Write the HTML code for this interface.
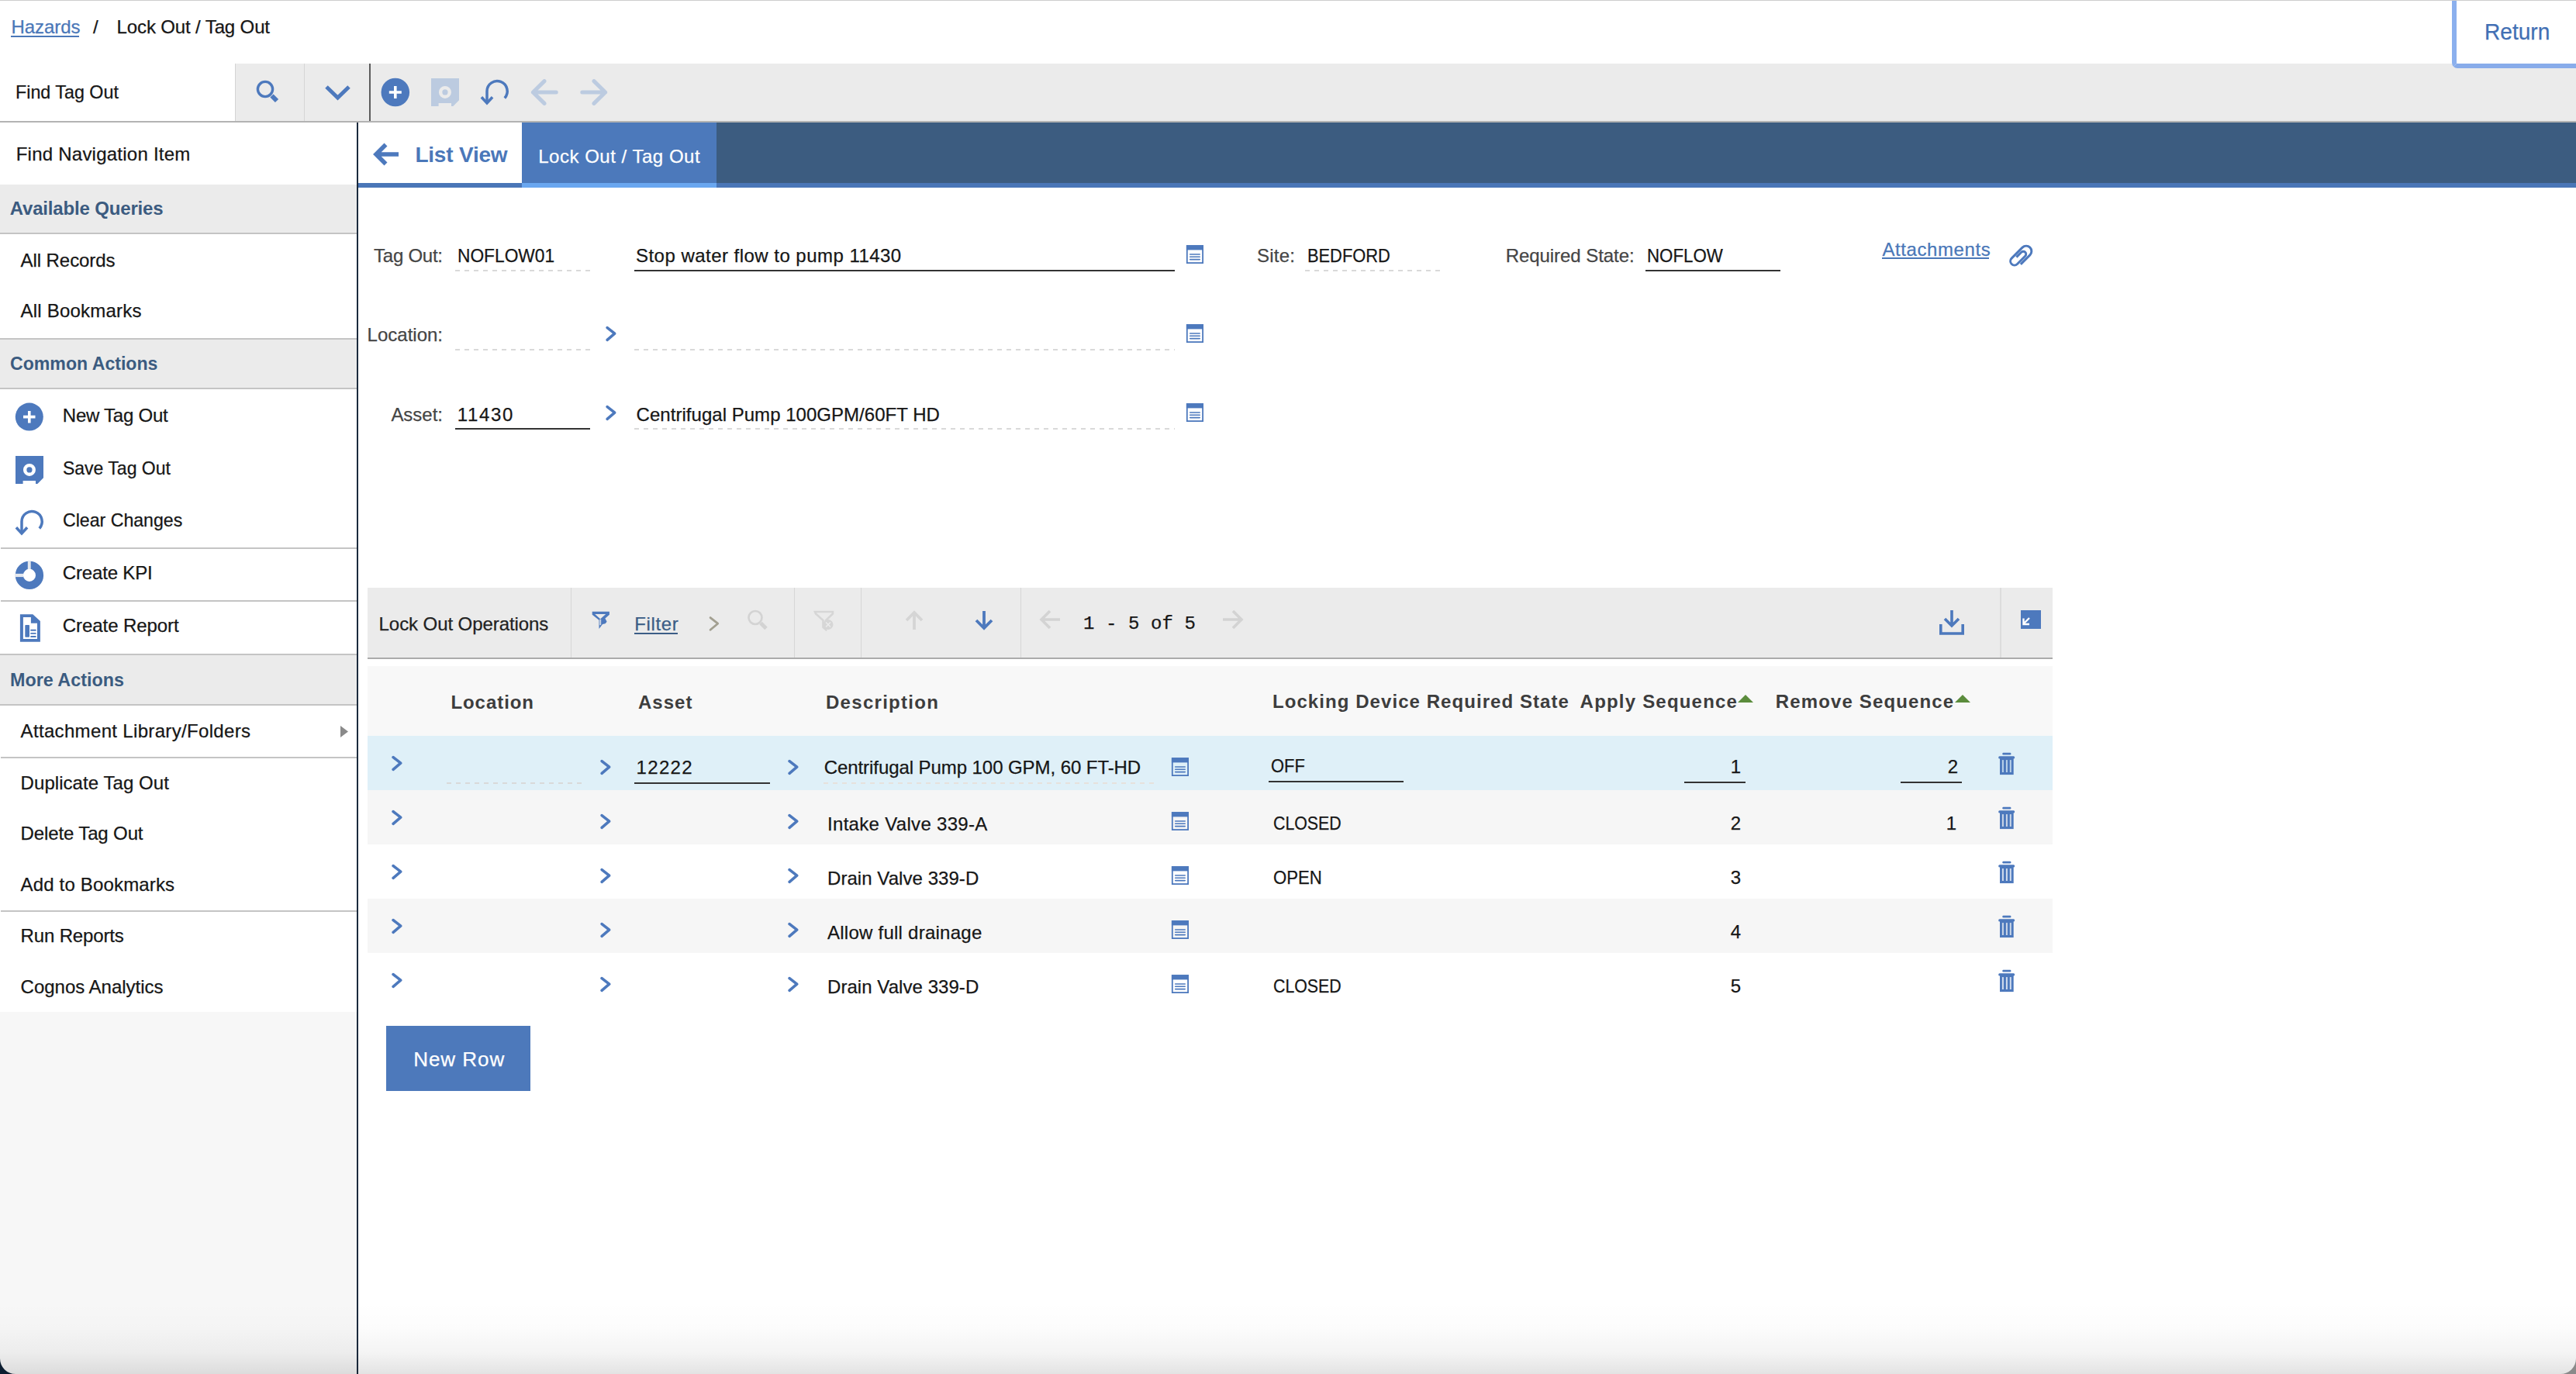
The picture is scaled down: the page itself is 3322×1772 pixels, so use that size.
<!DOCTYPE html>
<html><head><meta charset="utf-8"><style>
html,body{margin:0;padding:0;background:#fff;}
body{position:relative;width:3322px;height:1772px;overflow:hidden;font-family:'Liberation Sans', sans-serif;}
.tx{-webkit-text-stroke:0.25px currentColor;}
</style></head><body>
<div style="position:absolute;left:14px;top:46px;width:88px;height:2px;background:#4a77b8;"></div>
<div style="position:absolute;left:0px;top:82px;width:3322px;height:74px;background:#ebebeb;"></div>
<div style="position:absolute;left:0px;top:156px;width:3322px;height:2px;background:#b3b3b3;"></div>
<div style="position:absolute;left:0px;top:82px;width:303px;height:74px;background:#ffffff;"></div>
<div style="position:absolute;left:303px;top:82px;width:1px;height:74px;background:#d4d4d4;"></div>
<div style="position:absolute;left:392px;top:82px;width:1px;height:74px;background:#d6d6d6;"></div>
<div style="position:absolute;left:476px;top:82px;width:2px;height:74px;background:#5c5c5c;"></div>
<svg style="position:absolute;left:325px;top:98px" width="40" height="40" viewBox="0 0 40 40"><circle cx="17" cy="17" r="9.6" fill="none" stroke="#4d79bd" stroke-width="3.4"/><line x1="25.5" y1="25.5" x2="32" y2="32" stroke="#4d79bd" stroke-width="6"/></svg>
<svg style="position:absolute;left:415px;top:104px" width="42" height="30" viewBox="0 0 42 30"><polyline points="6,8 20.5,22 35,8" fill="none" stroke="#4d79bd" stroke-width="5"/></svg>
<svg style="position:absolute;left:490px;top:99px" width="40" height="40" viewBox="0 0 40 40"><circle cx="19.8" cy="20" r="18.3" fill="#4d79bd"/><path d="M19.8 12v16M11.8 20h16" stroke="#fff" stroke-width="3.6"/></svg>
<svg style="position:absolute;left:556px;top:101px" width="36" height="36" viewBox="0 0 36 36"><path d="M0 0H36V28.2L28.3 36H26V32.1H9.6V36H0Z" fill="#bccbe0"/><circle cx="17.95" cy="17.9" r="5.8" fill="none" stroke="#ebebeb" stroke-width="4.4"/></svg>
<svg style="position:absolute;left:610.0px;top:95.05px" width="50" height="45" viewBox="0 0 50 45"><path d="M40.8 31.5 A13.1 13.1 0 1 0 18 22.7 V37" fill="none" stroke="#4d79bd" stroke-width="3.5"/><path d="M10.9 30.3 L18 38 L25.1 30.3" fill="none" stroke="#4d79bd" stroke-width="3.5"/></svg>
<svg style="position:absolute;left:683px;top:102px" width="38" height="34" viewBox="0 0 38 34"><path d="M19 2.6 L4.4 17 L19 31.4 M4.4 17 H34.2" fill="none" stroke="#bccbe0" stroke-width="5" stroke-linecap="round" stroke-linejoin="round"/></svg>
<svg style="position:absolute;left:746.5px;top:102px" width="38" height="34" viewBox="0 0 38 34"><g transform="translate(38,0) scale(-1,1)"><path d="M19 2.6 L4.4 17 L19 31.4 M4.4 17 H34.2" fill="none" stroke="#bccbe0" stroke-width="5" stroke-linecap="round" stroke-linejoin="round"/></g></svg>
<div style="position:absolute;left:3162px;top:-6px;width:200px;height:88px;background:#fff;border-left:6px solid #8bb0ee;border-bottom:6px solid #88acea;border-bottom-left-radius:7px"></div>
<div style="position:absolute;left:0px;top:0px;width:3322px;height:1px;background:#cdcdcd;"></div>
<div style="position:absolute;left:0px;top:158px;width:460px;height:1147px;background:#ffffff;"></div>
<div style="position:absolute;left:0px;top:1305px;width:460px;height:3322px;background:#f7f7f7;"></div>
<div style="position:absolute;left:460px;top:158px;width:2px;height:1614px;background:#1b2a3d;"></div>
<div style="position:absolute;left:0px;top:238px;width:460px;height:62px;background:#ebebeb;"></div>
<div style="position:absolute;left:0px;top:300px;width:460px;height:2px;background:#c4c4c4;"></div>
<div style="position:absolute;left:0px;top:436px;width:460px;height:2px;background:#c4c4c4;"></div>
<div style="position:absolute;left:0px;top:438px;width:460px;height:62px;background:#ebebeb;"></div>
<div style="position:absolute;left:0px;top:500px;width:460px;height:2px;background:#c4c4c4;"></div>
<svg style="position:absolute;left:19px;top:519px" width="38" height="38" viewBox="0 0 38 38"><circle cx="18.8" cy="18.6" r="18" fill="#4d79bd"/><path d="M18.8 11v15.5M11 18.6h15.5" stroke="#fff" stroke-width="3.6"/></svg>
<svg style="position:absolute;left:20px;top:588px" width="36" height="36" viewBox="0 0 36 36"><path d="M0 0H36V28.2L28.3 36H26V32.1H9.6V36H0Z" fill="#4d79bd"/><circle cx="17.95" cy="17.9" r="5.8" fill="none" stroke="#ffffff" stroke-width="4.4"/></svg>
<svg style="position:absolute;left:10.0px;top:650.0px" width="50" height="45" viewBox="0 0 50 45"><path d="M40.8 31.5 A13.1 13.1 0 1 0 18 22.7 V37" fill="none" stroke="#4d79bd" stroke-width="3.5"/><path d="M10.9 30.3 L18 38 L25.1 30.3" fill="none" stroke="#4d79bd" stroke-width="3.5"/></svg>
<div style="position:absolute;left:1px;top:706px;width:459px;height:2px;background:#c4c4c4;"></div>
<svg style="position:absolute;left:19px;top:723px" width="38" height="38" viewBox="0 0 38 38"><circle cx="18.95" cy="18.9" r="13.1" fill="none" stroke="#4d79bd" stroke-width="10.1"/><rect x="16.8" y="0" width="3.9" height="11" fill="#e4e8ee"/><rect x="0" y="16.9" width="11" height="4.2" fill="#e4e8ee"/></svg>
<div style="position:absolute;left:1px;top:774px;width:459px;height:2px;background:#c4c4c4;"></div>
<svg style="position:absolute;left:25px;top:791px" width="29" height="38" viewBox="0 0 29 38"><path fill-rule="evenodd" d="M0.9 1.2H17.3L26.9 10V36.8H0.9Z M4.9 5H14.9V12.8H23V32.9H4.9Z" fill="#4d79bd"/><rect x="7.3" y="15.1" width="5.7" height="15.6" rx="0.8" fill="#4d79bd"/><path d="M15.1 21.8h5.7M15.1 25.9h5.7M15.1 30h5.7" stroke="#4d79bd" stroke-width="1.9" stroke-linecap="round"/></svg>
<div style="position:absolute;left:0px;top:843px;width:460px;height:2px;background:#c4c4c4;"></div>
<div style="position:absolute;left:0px;top:845px;width:460px;height:63px;background:#ebebeb;"></div>
<div style="position:absolute;left:0px;top:908px;width:460px;height:2px;background:#c4c4c4;"></div>
<svg style="position:absolute;left:437px;top:934px" width="16" height="20" viewBox="0 0 16 20"><path d="M2 2 L12 9.5 L2 17Z" fill="#8a8a8a"/></svg>
<div style="position:absolute;left:1px;top:976px;width:459px;height:2px;background:#c4c4c4;"></div>
<div style="position:absolute;left:1px;top:1173.5px;width:459px;height:2px;background:#c4c4c4;"></div>
<div style="position:absolute;left:462px;top:158px;width:2860px;height:78px;background:#3c5c80;"></div>
<div style="position:absolute;left:462px;top:158px;width:211px;height:78px;background:#ffffff;"></div>
<div style="position:absolute;left:673px;top:158px;width:251px;height:78px;background:#4c79bb;"></div>
<div style="position:absolute;left:462px;top:236px;width:2860px;height:6px;background:#4a76b7;"></div>
<div style="position:absolute;left:673px;top:236px;width:251px;height:6px;background:#6aa7f0;"></div>
<svg style="position:absolute;left:480px;top:182px" width="36" height="36" viewBox="0 0 36 36"><path d="M17.5 4.5 L5 17 L17.5 29.5 M5 17 H34" fill="none" stroke="#4d79bd" stroke-width="5.6"/></svg>
<div style="position:absolute;left:587px;top:348px;width:174px;height:2px;background:repeating-linear-gradient(90deg,#d9d9d9 0 6px,transparent 6px 12px)"></div>
<div style="position:absolute;left:818px;top:348px;width:697px;height:2px;background:#333333;"></div>
<svg style="position:absolute;left:1529px;top:314.5px" width="24" height="26" viewBox="0 0 24 26"><rect x="1.8" y="2.1" width="20.3" height="22" fill="none" stroke="#4d79bd" stroke-width="1.8"/><rect x="0.9" y="1.2" width="22.1" height="6.2" fill="#4d79bd"/><path d="M5.7 13h12.5M5.7 16.3h12.5M5.7 19.6h12.5" stroke="#4d79bd" stroke-width="1.6" stroke-linecap="round"/></svg>
<div style="position:absolute;left:1683px;top:348px;width:174px;height:2px;background:repeating-linear-gradient(90deg,#d9d9d9 0 6px,transparent 6px 12px)"></div>
<div style="position:absolute;left:2122px;top:348px;width:174px;height:2px;background:#333333;"></div>
<div style="position:absolute;left:2427px;top:332px;width:138px;height:2px;background:#4a77b8;"></div>
<svg style="position:absolute;left:2585px;top:308px" width="42" height="42" viewBox="0 0 42 42"><g transform="translate(21.6,22.4) rotate(45) scale(1.06) translate(0,-15)"><path d="M6.5 22.5 V6.5 A6.5 6.5 0 0 0 -6.5 6.5 V25.1 A4.9 4.9 0 0 0 3.3 25.1 V11.5 A3.3 3.3 0 0 0 -3.3 11.5 V20" fill="none" stroke="#4d79bd" stroke-width="2.8"/></g></svg>
<div style="position:absolute;left:587px;top:450px;width:174px;height:2px;background:repeating-linear-gradient(90deg,#d9d9d9 0 6px,transparent 6px 12px)"></div>
<svg style="position:absolute;left:779.7px;top:420px" width="20" height="24" viewBox="0 0 20 24"><polyline points="3.1,2.6 12.7,10.2 3.1,18.3" fill="none" stroke="#4d79bd" stroke-width="3.6" stroke-linecap="round" stroke-linejoin="round"/></svg>
<div style="position:absolute;left:818px;top:450px;width:697px;height:2px;background:repeating-linear-gradient(90deg,#d9d9d9 0 6px,transparent 6px 12px)"></div>
<svg style="position:absolute;left:1529px;top:416.5px" width="24" height="26" viewBox="0 0 24 26"><rect x="1.8" y="2.1" width="20.3" height="22" fill="none" stroke="#4d79bd" stroke-width="1.8"/><rect x="0.9" y="1.2" width="22.1" height="6.2" fill="#4d79bd"/><path d="M5.7 13h12.5M5.7 16.3h12.5M5.7 19.6h12.5" stroke="#4d79bd" stroke-width="1.6" stroke-linecap="round"/></svg>
<div style="position:absolute;left:587px;top:552px;width:174px;height:2px;background:#333333;"></div>
<svg style="position:absolute;left:779.7px;top:521.6px" width="20" height="24" viewBox="0 0 20 24"><polyline points="3.1,2.6 12.7,10.2 3.1,18.3" fill="none" stroke="#4d79bd" stroke-width="3.6" stroke-linecap="round" stroke-linejoin="round"/></svg>
<div style="position:absolute;left:818px;top:552px;width:697px;height:2px;background:repeating-linear-gradient(90deg,#d9d9d9 0 6px,transparent 6px 12px)"></div>
<svg style="position:absolute;left:1529px;top:519px" width="24" height="26" viewBox="0 0 24 26"><rect x="1.8" y="2.1" width="20.3" height="22" fill="none" stroke="#4d79bd" stroke-width="1.8"/><rect x="0.9" y="1.2" width="22.1" height="6.2" fill="#4d79bd"/><path d="M5.7 13h12.5M5.7 16.3h12.5M5.7 19.6h12.5" stroke="#4d79bd" stroke-width="1.6" stroke-linecap="round"/></svg>
<div style="position:absolute;left:474px;top:758px;width:2173px;height:90px;background:#ebebeb;"></div>
<div style="position:absolute;left:474px;top:848px;width:2173px;height:2px;background:#ababab;"></div>
<div style="position:absolute;left:735.5px;top:758px;width:1px;height:90px;background:#d6d6d6;"></div>
<div style="position:absolute;left:1023.5px;top:758px;width:1px;height:90px;background:#d6d6d6;"></div>
<div style="position:absolute;left:1110px;top:758px;width:1px;height:90px;background:#d6d6d6;"></div>
<div style="position:absolute;left:1315.5px;top:758px;width:1px;height:90px;background:#d6d6d6;"></div>
<div style="position:absolute;left:2579px;top:758px;width:2px;height:90px;background:#dcdcdc;"></div>
<svg style="position:absolute;left:760px;top:785px" width="28" height="30" viewBox="0 0 28 30"><path fill-rule="evenodd" d="M3.7 3.7 H25.9 V7.8 L20.4 12.6 L22.6 16.8 L20.6 19.2 L17.1 20 L12.5 25.9 V14.8 L3.7 7.8Z M7.2 7 H21.2 L14.2 13.3Z" fill="#4d79bd"/><rect x="13.2" y="13.6" width="2" height="7.6" fill="#c9d3e2"/></svg>
<div style="position:absolute;left:817.5px;top:816px;width:56px;height:2px;background:#3b5d86;"></div>
<svg style="position:absolute;left:912.5px;top:793.7px" width="20" height="24" viewBox="0 0 20 24"><polyline points="3.1,2.6 12.7,10.2 3.1,18.3" fill="none" stroke="#a29f90" stroke-width="2.8" stroke-linecap="round" stroke-linejoin="round"/></svg>
<svg style="position:absolute;left:960px;top:784px" width="34" height="32" viewBox="0 0 34 32"><circle cx="14" cy="12.5" r="8.5" fill="none" stroke="#d3d3d3" stroke-width="2.6"/><line x1="21" y1="19.5" x2="28" y2="26.5" stroke="#d3d3d3" stroke-width="5"/></svg>
<svg style="position:absolute;left:1049px;top:786px" width="28" height="28" viewBox="0 0 28 28"><path d="M2 3 H25 V5.5 L16 14 V26 L12.5 23 V14 L3 5.5Z" fill="none" stroke="#d6d6d6" stroke-width="2.6"/><circle cx="19" cy="19.5" r="6.5" fill="#d6d6d6"/><path d="M16 16.5l6 6M22 16.5l-6 6" stroke="#ebebeb" stroke-width="1.6"/></svg>
<svg style="position:absolute;left:1166px;top:786px" width="26" height="28" viewBox="0 0 26 28"><path d="M3 14 L13 4 L23 14 M13 4 V26" fill="none" stroke="#d5d5d5" stroke-width="3.8"/></svg>
<svg style="position:absolute;left:1256px;top:786px" width="26" height="28" viewBox="0 0 26 28"><g transform="translate(0,28) scale(1,-1)"><path d="M3 14 L13 4 L23 14 M13 4 V26" fill="none" stroke="#4d79bd" stroke-width="3.8"/></g></svg>
<svg style="position:absolute;left:1340px;top:785px" width="30" height="30" viewBox="0 0 30 30"><path d="M14 3 L3 14 L14 25 M3 14 H27" fill="none" stroke="#d3d3d3" stroke-width="3.6"/></svg>
<svg style="position:absolute;left:1574px;top:785px" width="30" height="30" viewBox="0 0 30 30"><g transform="translate(30,0) scale(-1,1)"><path d="M14 3 L3 14 L14 25 M3 14 H27" fill="none" stroke="#d3d3d3" stroke-width="3.6"/></g></svg>
<svg style="position:absolute;left:2499px;top:785px" width="36" height="36" viewBox="0 0 36 36"><path d="M18 2 V22 M9 13 L18 22 L27 13" fill="none" stroke="#4d79bd" stroke-width="3.6"/><path d="M3.8 20 V32 H32.2 V20" fill="none" stroke="#4d79bd" stroke-width="3.6"/></svg>
<svg style="position:absolute;left:2606px;top:787px" width="26" height="24" viewBox="0 0 26 24"><rect x="0" y="0" width="26" height="24" fill="#4d79bd"/><path d="M11 10 L4 17 M3.5 10.5 V18 H11" fill="none" stroke="#fff" stroke-width="2.4"/></svg>
<div style="position:absolute;left:474px;top:859px;width:2173px;height:90px;background:#f8f8f8;"></div>
<svg style="position:absolute;left:2241px;top:896px" width="20" height="10" viewBox="0 0 20 10"><path d="M0 10 L10 0 L20 10Z" fill="#5b8c3c"/></svg>
<svg style="position:absolute;left:2520.6px;top:896px" width="20" height="10" viewBox="0 0 20 10"><path d="M0 10 L10 0 L20 10Z" fill="#5b8c3c"/></svg>
<div style="position:absolute;left:474px;top:948.7px;width:2173px;height:70px;background:#dff0f8;"></div>
<svg style="position:absolute;left:504.4px;top:974.2px" width="20" height="24" viewBox="0 0 20 24"><polyline points="3.1,2.6 12.7,10.2 3.1,18.3" fill="none" stroke="#4d79bd" stroke-width="3.6" stroke-linecap="round" stroke-linejoin="round"/></svg>
<svg style="position:absolute;left:772.8px;top:978.9px" width="20" height="24" viewBox="0 0 20 24"><polyline points="3.1,2.6 12.7,10.2 3.1,18.3" fill="none" stroke="#4d79bd" stroke-width="3.6" stroke-linecap="round" stroke-linejoin="round"/></svg>
<svg style="position:absolute;left:1015px;top:978.9px" width="20" height="24" viewBox="0 0 20 24"><polyline points="3.1,2.6 12.7,10.2 3.1,18.3" fill="none" stroke="#4d79bd" stroke-width="3.6" stroke-linecap="round" stroke-linejoin="round"/></svg>
<svg style="position:absolute;left:1510px;top:976.2px" width="24" height="26" viewBox="0 0 24 26"><rect x="1.8" y="2.1" width="20.3" height="22" fill="none" stroke="#4d79bd" stroke-width="1.8"/><rect x="0.9" y="1.2" width="22.1" height="6.2" fill="#4d79bd"/><path d="M5.7 13h12.5M5.7 16.3h12.5M5.7 19.6h12.5" stroke="#4d79bd" stroke-width="1.6" stroke-linecap="round"/></svg>
<svg style="position:absolute;left:2576px;top:969.7px" width="24" height="30" viewBox="0 0 24 30"><rect x="6.3" y="0.7" width="11.1" height="2.8" rx="1.2" fill="#4d79bd"/><rect x="1.2" y="5.3" width="21" height="3.3" rx="1.5" fill="#4d79bd"/><rect x="3" y="8" width="17.7" height="21.1" fill="#4d79bd"/><rect x="5.9" y="10.1" width="2" height="15.9" fill="#dff0f8" opacity="0.75"/><rect x="10.9" y="10.1" width="2" height="15.9" fill="#dff0f8" opacity="0.75"/><rect x="15.8" y="10.1" width="2" height="15.9" fill="#dff0f8" opacity="0.75"/></svg>
<div style="position:absolute;left:576px;top:1009.2px;width:175px;height:2px;background:repeating-linear-gradient(90deg,#d9d9d9 0 6px,transparent 6px 12px)"></div>
<div style="position:absolute;left:818px;top:1009.0px;width:175px;height:2px;background:#333333;"></div>
<div style="position:absolute;left:1062px;top:1009.2px;width:430px;height:2px;background:repeating-linear-gradient(90deg,#e6e1dc 0 6px,transparent 6px 12px)"></div>
<div style="position:absolute;left:1636px;top:1007.0px;width:174px;height:2px;background:#333333;"></div>
<div style="position:absolute;left:2172px;top:1008.0px;width:79px;height:2px;background:#333333;"></div>
<div style="position:absolute;left:2451px;top:1008.0px;width:79px;height:2px;background:#333333;"></div>
<div style="position:absolute;left:474px;top:1018.7px;width:2173px;height:70px;background:#f6f6f6;"></div>
<svg style="position:absolute;left:504.4px;top:1044.2px" width="20" height="24" viewBox="0 0 20 24"><polyline points="3.1,2.6 12.7,10.2 3.1,18.3" fill="none" stroke="#4d79bd" stroke-width="3.6" stroke-linecap="round" stroke-linejoin="round"/></svg>
<svg style="position:absolute;left:772.8px;top:1048.9px" width="20" height="24" viewBox="0 0 20 24"><polyline points="3.1,2.6 12.7,10.2 3.1,18.3" fill="none" stroke="#4d79bd" stroke-width="3.6" stroke-linecap="round" stroke-linejoin="round"/></svg>
<svg style="position:absolute;left:1015px;top:1048.9px" width="20" height="24" viewBox="0 0 20 24"><polyline points="3.1,2.6 12.7,10.2 3.1,18.3" fill="none" stroke="#4d79bd" stroke-width="3.6" stroke-linecap="round" stroke-linejoin="round"/></svg>
<svg style="position:absolute;left:1510px;top:1046.2px" width="24" height="26" viewBox="0 0 24 26"><rect x="1.8" y="2.1" width="20.3" height="22" fill="none" stroke="#4d79bd" stroke-width="1.8"/><rect x="0.9" y="1.2" width="22.1" height="6.2" fill="#4d79bd"/><path d="M5.7 13h12.5M5.7 16.3h12.5M5.7 19.6h12.5" stroke="#4d79bd" stroke-width="1.6" stroke-linecap="round"/></svg>
<svg style="position:absolute;left:2576px;top:1039.7px" width="24" height="30" viewBox="0 0 24 30"><rect x="6.3" y="0.7" width="11.1" height="2.8" rx="1.2" fill="#4d79bd"/><rect x="1.2" y="5.3" width="21" height="3.3" rx="1.5" fill="#4d79bd"/><rect x="3" y="8" width="17.7" height="21.1" fill="#4d79bd"/><rect x="5.9" y="10.1" width="2" height="15.9" fill="#f6f6f6" opacity="0.75"/><rect x="10.9" y="10.1" width="2" height="15.9" fill="#f6f6f6" opacity="0.75"/><rect x="15.8" y="10.1" width="2" height="15.9" fill="#f6f6f6" opacity="0.75"/></svg>
<div style="position:absolute;left:474px;top:1088.7px;width:2173px;height:70px;background:#ffffff;"></div>
<svg style="position:absolute;left:504.4px;top:1114.2px" width="20" height="24" viewBox="0 0 20 24"><polyline points="3.1,2.6 12.7,10.2 3.1,18.3" fill="none" stroke="#4d79bd" stroke-width="3.6" stroke-linecap="round" stroke-linejoin="round"/></svg>
<svg style="position:absolute;left:772.8px;top:1118.9px" width="20" height="24" viewBox="0 0 20 24"><polyline points="3.1,2.6 12.7,10.2 3.1,18.3" fill="none" stroke="#4d79bd" stroke-width="3.6" stroke-linecap="round" stroke-linejoin="round"/></svg>
<svg style="position:absolute;left:1015px;top:1118.9px" width="20" height="24" viewBox="0 0 20 24"><polyline points="3.1,2.6 12.7,10.2 3.1,18.3" fill="none" stroke="#4d79bd" stroke-width="3.6" stroke-linecap="round" stroke-linejoin="round"/></svg>
<svg style="position:absolute;left:1510px;top:1116.2px" width="24" height="26" viewBox="0 0 24 26"><rect x="1.8" y="2.1" width="20.3" height="22" fill="none" stroke="#4d79bd" stroke-width="1.8"/><rect x="0.9" y="1.2" width="22.1" height="6.2" fill="#4d79bd"/><path d="M5.7 13h12.5M5.7 16.3h12.5M5.7 19.6h12.5" stroke="#4d79bd" stroke-width="1.6" stroke-linecap="round"/></svg>
<svg style="position:absolute;left:2576px;top:1109.7px" width="24" height="30" viewBox="0 0 24 30"><rect x="6.3" y="0.7" width="11.1" height="2.8" rx="1.2" fill="#4d79bd"/><rect x="1.2" y="5.3" width="21" height="3.3" rx="1.5" fill="#4d79bd"/><rect x="3" y="8" width="17.7" height="21.1" fill="#4d79bd"/><rect x="5.9" y="10.1" width="2" height="15.9" fill="#ffffff" opacity="0.75"/><rect x="10.9" y="10.1" width="2" height="15.9" fill="#ffffff" opacity="0.75"/><rect x="15.8" y="10.1" width="2" height="15.9" fill="#ffffff" opacity="0.75"/></svg>
<div style="position:absolute;left:474px;top:1158.7px;width:2173px;height:70px;background:#f6f6f6;"></div>
<svg style="position:absolute;left:504.4px;top:1184.2px" width="20" height="24" viewBox="0 0 20 24"><polyline points="3.1,2.6 12.7,10.2 3.1,18.3" fill="none" stroke="#4d79bd" stroke-width="3.6" stroke-linecap="round" stroke-linejoin="round"/></svg>
<svg style="position:absolute;left:772.8px;top:1188.9px" width="20" height="24" viewBox="0 0 20 24"><polyline points="3.1,2.6 12.7,10.2 3.1,18.3" fill="none" stroke="#4d79bd" stroke-width="3.6" stroke-linecap="round" stroke-linejoin="round"/></svg>
<svg style="position:absolute;left:1015px;top:1188.9px" width="20" height="24" viewBox="0 0 20 24"><polyline points="3.1,2.6 12.7,10.2 3.1,18.3" fill="none" stroke="#4d79bd" stroke-width="3.6" stroke-linecap="round" stroke-linejoin="round"/></svg>
<svg style="position:absolute;left:1510px;top:1186.2px" width="24" height="26" viewBox="0 0 24 26"><rect x="1.8" y="2.1" width="20.3" height="22" fill="none" stroke="#4d79bd" stroke-width="1.8"/><rect x="0.9" y="1.2" width="22.1" height="6.2" fill="#4d79bd"/><path d="M5.7 13h12.5M5.7 16.3h12.5M5.7 19.6h12.5" stroke="#4d79bd" stroke-width="1.6" stroke-linecap="round"/></svg>
<svg style="position:absolute;left:2576px;top:1179.7px" width="24" height="30" viewBox="0 0 24 30"><rect x="6.3" y="0.7" width="11.1" height="2.8" rx="1.2" fill="#4d79bd"/><rect x="1.2" y="5.3" width="21" height="3.3" rx="1.5" fill="#4d79bd"/><rect x="3" y="8" width="17.7" height="21.1" fill="#4d79bd"/><rect x="5.9" y="10.1" width="2" height="15.9" fill="#f6f6f6" opacity="0.75"/><rect x="10.9" y="10.1" width="2" height="15.9" fill="#f6f6f6" opacity="0.75"/><rect x="15.8" y="10.1" width="2" height="15.9" fill="#f6f6f6" opacity="0.75"/></svg>
<div style="position:absolute;left:474px;top:1228.7px;width:2173px;height:70px;background:#ffffff;"></div>
<svg style="position:absolute;left:504.4px;top:1254.2px" width="20" height="24" viewBox="0 0 20 24"><polyline points="3.1,2.6 12.7,10.2 3.1,18.3" fill="none" stroke="#4d79bd" stroke-width="3.6" stroke-linecap="round" stroke-linejoin="round"/></svg>
<svg style="position:absolute;left:772.8px;top:1258.9px" width="20" height="24" viewBox="0 0 20 24"><polyline points="3.1,2.6 12.7,10.2 3.1,18.3" fill="none" stroke="#4d79bd" stroke-width="3.6" stroke-linecap="round" stroke-linejoin="round"/></svg>
<svg style="position:absolute;left:1015px;top:1258.9px" width="20" height="24" viewBox="0 0 20 24"><polyline points="3.1,2.6 12.7,10.2 3.1,18.3" fill="none" stroke="#4d79bd" stroke-width="3.6" stroke-linecap="round" stroke-linejoin="round"/></svg>
<svg style="position:absolute;left:1510px;top:1256.2px" width="24" height="26" viewBox="0 0 24 26"><rect x="1.8" y="2.1" width="20.3" height="22" fill="none" stroke="#4d79bd" stroke-width="1.8"/><rect x="0.9" y="1.2" width="22.1" height="6.2" fill="#4d79bd"/><path d="M5.7 13h12.5M5.7 16.3h12.5M5.7 19.6h12.5" stroke="#4d79bd" stroke-width="1.6" stroke-linecap="round"/></svg>
<svg style="position:absolute;left:2576px;top:1249.7px" width="24" height="30" viewBox="0 0 24 30"><rect x="6.3" y="0.7" width="11.1" height="2.8" rx="1.2" fill="#4d79bd"/><rect x="1.2" y="5.3" width="21" height="3.3" rx="1.5" fill="#4d79bd"/><rect x="3" y="8" width="17.7" height="21.1" fill="#4d79bd"/><rect x="5.9" y="10.1" width="2" height="15.9" fill="#ffffff" opacity="0.75"/><rect x="10.9" y="10.1" width="2" height="15.9" fill="#ffffff" opacity="0.75"/><rect x="15.8" y="10.1" width="2" height="15.9" fill="#ffffff" opacity="0.75"/></svg>
<div style="position:absolute;left:498px;top:1323px;width:186px;height:84px;background:#4d79bb;"></div>
<div style="position:absolute;left:0;top:1680px;width:3322px;height:92px;background:linear-gradient(180deg,rgba(0,0,0,0) 0%,rgba(0,0,0,0.012) 35%,rgba(0,0,0,0.045) 70%,rgba(0,0,0,0.11) 100%)"></div>
<svg style="position:absolute;left:0px;top:1752px" width="20" height="20" viewBox="0 0 20 20"><path d="M0 0 A20 20 0 0 0 20 20 H0Z" fill="#0c1d30"/></svg>
<svg style="position:absolute;left:3302px;top:1752px" width="20" height="20" viewBox="0 0 20 20"><path d="M20 0 A20 20 0 0 1 0 20 H20Z" fill="#8a8a8a"/></svg>
<div class="tx" style="position:absolute;left:14.50px;top:23.30px;font-family:'Liberation Sans', sans-serif;font-size:24px;font-weight:400;color:#4a77b8;line-height:1;white-space:pre;letter-spacing:-0.076px;">Hazards</div>
<div class="tx" style="position:absolute;left:120.00px;top:23.30px;font-family:'Liberation Sans', sans-serif;font-size:24px;font-weight:400;color:#161616;line-height:1;white-space:pre;letter-spacing:0.000px;">/</div>
<div class="tx" style="position:absolute;left:150.60px;top:23.30px;font-family:'Liberation Sans', sans-serif;font-size:24px;font-weight:400;color:#161616;line-height:1;white-space:pre;letter-spacing:-0.132px;">Lock Out / Tag Out</div>
<div class="tx" style="position:absolute;left:20.40px;top:106.60px;font-family:'Liberation Sans', sans-serif;font-size:24px;font-weight:400;color:#161616;line-height:1;white-space:pre;letter-spacing:0.000px;transform:scaleX(0.9700);transform-origin:0 0;">Find Tag Out</div>
<div class="tx" style="position:absolute;left:3203.70px;top:27.15px;font-family:'Liberation Sans', sans-serif;font-size:29px;font-weight:400;color:#416fb4;line-height:1;white-space:pre;letter-spacing:0.000px;transform:scaleX(0.9678);transform-origin:0 0;">Return</div>
<div class="tx" style="position:absolute;left:20.70px;top:186.80px;font-family:'Liberation Sans', sans-serif;font-size:24px;font-weight:400;color:#161616;line-height:1;white-space:pre;letter-spacing:0.237px;">Find Navigation Item</div>
<div class="" style="position:absolute;left:12.70px;top:257.30px;font-family:'Liberation Sans', sans-serif;font-size:24px;font-weight:700;color:#3b5b80;line-height:1;white-space:pre;letter-spacing:-0.164px;">Available Queries</div>
<div class="tx" style="position:absolute;left:26.60px;top:323.50px;font-family:'Liberation Sans', sans-serif;font-size:24px;font-weight:400;color:#161616;line-height:1;white-space:pre;letter-spacing:-0.080px;">All Records</div>
<div class="tx" style="position:absolute;left:26.60px;top:389.40px;font-family:'Liberation Sans', sans-serif;font-size:24px;font-weight:400;color:#161616;line-height:1;white-space:pre;letter-spacing:0.212px;">All Bookmarks</div>
<div class="" style="position:absolute;left:12.70px;top:457.20px;font-family:'Liberation Sans', sans-serif;font-size:24px;font-weight:700;color:#3b5b80;line-height:1;white-space:pre;letter-spacing:0.000px;transform:scaleX(0.9629);transform-origin:0 0;">Common Actions</div>
<div class="tx" style="position:absolute;left:80.80px;top:523.60px;font-family:'Liberation Sans', sans-serif;font-size:24px;font-weight:400;color:#161616;line-height:1;white-space:pre;letter-spacing:-0.238px;">New Tag Out</div>
<div class="tx" style="position:absolute;left:80.80px;top:591.50px;font-family:'Liberation Sans', sans-serif;font-size:24px;font-weight:400;color:#161616;line-height:1;white-space:pre;letter-spacing:0.000px;transform:scaleX(0.9576);transform-origin:0 0;">Save Tag Out</div>
<div class="tx" style="position:absolute;left:80.80px;top:659.20px;font-family:'Liberation Sans', sans-serif;font-size:24px;font-weight:400;color:#161616;line-height:1;white-space:pre;letter-spacing:0.000px;transform:scaleX(0.9635);transform-origin:0 0;">Clear Changes</div>
<div class="tx" style="position:absolute;left:80.80px;top:727.20px;font-family:'Liberation Sans', sans-serif;font-size:24px;font-weight:400;color:#161616;line-height:1;white-space:pre;letter-spacing:-0.163px;">Create KPI</div>
<div class="tx" style="position:absolute;left:80.80px;top:795.30px;font-family:'Liberation Sans', sans-serif;font-size:24px;font-weight:400;color:#161616;line-height:1;white-space:pre;letter-spacing:-0.069px;">Create Report</div>
<div class="" style="position:absolute;left:12.70px;top:865.20px;font-family:'Liberation Sans', sans-serif;font-size:24px;font-weight:700;color:#3b5b80;line-height:1;white-space:pre;letter-spacing:0.000px;transform:scaleX(0.9718);transform-origin:0 0;">More Actions</div>
<div class="tx" style="position:absolute;left:26.60px;top:931.30px;font-family:'Liberation Sans', sans-serif;font-size:24px;font-weight:400;color:#161616;line-height:1;white-space:pre;letter-spacing:0.332px;">Attachment Library/Folders</div>
<div class="tx" style="position:absolute;left:26.60px;top:997.50px;font-family:'Liberation Sans', sans-serif;font-size:24px;font-weight:400;color:#161616;line-height:1;white-space:pre;letter-spacing:0.055px;">Duplicate Tag Out</div>
<div class="tx" style="position:absolute;left:26.60px;top:1063.20px;font-family:'Liberation Sans', sans-serif;font-size:24px;font-weight:400;color:#161616;line-height:1;white-space:pre;letter-spacing:-0.134px;">Delete Tag Out</div>
<div class="tx" style="position:absolute;left:26.60px;top:1129.10px;font-family:'Liberation Sans', sans-serif;font-size:24px;font-weight:400;color:#161616;line-height:1;white-space:pre;letter-spacing:0.162px;">Add to Bookmarks</div>
<div class="tx" style="position:absolute;left:26.60px;top:1195.30px;font-family:'Liberation Sans', sans-serif;font-size:24px;font-weight:400;color:#161616;line-height:1;white-space:pre;letter-spacing:-0.161px;">Run Reports</div>
<div class="tx" style="position:absolute;left:26.60px;top:1260.80px;font-family:'Liberation Sans', sans-serif;font-size:24px;font-weight:400;color:#161616;line-height:1;white-space:pre;letter-spacing:-0.013px;">Cognos Analytics</div>
<div class="" style="position:absolute;left:535.40px;top:186.00px;font-family:'Liberation Sans', sans-serif;font-size:28px;font-weight:700;color:#4a77b9;line-height:1;white-space:pre;letter-spacing:-0.202px;">List View</div>
<div class="tx" style="position:absolute;left:694.20px;top:189.60px;font-family:'Liberation Sans', sans-serif;font-size:24px;font-weight:400;color:#ffffff;line-height:1;white-space:pre;letter-spacing:0.515px;">Lock Out / Tag Out</div>
<div class="tx" style="position:absolute;left:482.08px;top:318.10px;font-family:'Liberation Sans', sans-serif;font-size:24px;font-weight:400;color:#454545;line-height:1;white-space:pre;letter-spacing:-0.257px;">Tag Out:</div>
<div class="tx" style="position:absolute;left:589.70px;top:317.80px;font-family:'Liberation Sans', sans-serif;font-size:24px;font-weight:400;color:#161616;line-height:1;white-space:pre;letter-spacing:0.000px;transform:scaleX(0.9477);transform-origin:0 0;">NOFLOW01</div>
<div class="tx" style="position:absolute;left:820.00px;top:317.80px;font-family:'Liberation Sans', sans-serif;font-size:24px;font-weight:400;color:#161616;line-height:1;white-space:pre;letter-spacing:0.469px;">Stop water flow to pump 11430</div>
<div class="tx" style="position:absolute;left:1621.00px;top:318.10px;font-family:'Liberation Sans', sans-serif;font-size:24px;font-weight:400;color:#454545;line-height:1;white-space:pre;letter-spacing:0.222px;">Site:</div>
<div class="tx" style="position:absolute;left:1686.30px;top:317.80px;font-family:'Liberation Sans', sans-serif;font-size:24px;font-weight:400;color:#161616;line-height:1;white-space:pre;letter-spacing:0.000px;transform:scaleX(0.9097);transform-origin:0 0;">BEDFORD</div>
<div class="tx" style="position:absolute;left:1941.70px;top:318.10px;font-family:'Liberation Sans', sans-serif;font-size:24px;font-weight:400;color:#454545;line-height:1;white-space:pre;letter-spacing:-0.062px;">Required State:</div>
<div class="tx" style="position:absolute;left:2124.20px;top:317.80px;font-family:'Liberation Sans', sans-serif;font-size:24px;font-weight:400;color:#161616;line-height:1;white-space:pre;letter-spacing:0.000px;transform:scaleX(0.9284);transform-origin:0 0;">NOFLOW</div>
<div class="tx" style="position:absolute;left:2427.40px;top:309.80px;font-family:'Liberation Sans', sans-serif;font-size:24px;font-weight:400;color:#4a77b8;line-height:1;white-space:pre;letter-spacing:0.591px;">Attachments</div>
<div class="tx" style="position:absolute;left:473.58px;top:420.20px;font-family:'Liberation Sans', sans-serif;font-size:24px;font-weight:400;color:#454545;line-height:1;white-space:pre;letter-spacing:0.002px;">Location:</div>
<div class="tx" style="position:absolute;left:504.38px;top:522.70px;font-family:'Liberation Sans', sans-serif;font-size:24px;font-weight:400;color:#454545;line-height:1;white-space:pre;letter-spacing:-0.017px;">Asset:</div>
<div class="tx" style="position:absolute;left:589.70px;top:522.60px;font-family:'Liberation Sans', sans-serif;font-size:24px;font-weight:400;color:#161616;line-height:1;white-space:pre;letter-spacing:1.688px;">11430</div>
<div class="tx" style="position:absolute;left:820.60px;top:522.60px;font-family:'Liberation Sans', sans-serif;font-size:24px;font-weight:400;color:#161616;line-height:1;white-space:pre;letter-spacing:0.031px;">Centrifugal Pump 100GPM/60FT HD</div>
<div class="tx" style="position:absolute;left:488.60px;top:792.90px;font-family:'Liberation Sans', sans-serif;font-size:24px;font-weight:400;color:#222222;line-height:1;white-space:pre;letter-spacing:-0.078px;">Lock Out Operations</div>
<div class="tx" style="position:absolute;left:818.30px;top:793.40px;font-family:'Liberation Sans', sans-serif;font-size:24px;font-weight:400;color:#3b5d86;line-height:1;white-space:pre;letter-spacing:0.615px;">Filter</div>
<div class="tx" style="position:absolute;left:1396.90px;top:792.60px;font-family:'Liberation Mono', monospace;font-size:24px;font-weight:400;color:#161616;line-height:1;white-space:pre;letter-spacing:0.099px;">1 - 5 of 5</div>
<div class="" style="position:absolute;left:581.40px;top:893.60px;font-family:'Liberation Sans', sans-serif;font-size:24px;font-weight:700;color:#3d3d3d;line-height:1;white-space:pre;letter-spacing:0.946px;">Location</div>
<div class="" style="position:absolute;left:822.90px;top:893.60px;font-family:'Liberation Sans', sans-serif;font-size:24px;font-weight:700;color:#3d3d3d;line-height:1;white-space:pre;letter-spacing:1.036px;">Asset</div>
<div class="" style="position:absolute;left:1065.00px;top:893.60px;font-family:'Liberation Sans', sans-serif;font-size:24px;font-weight:700;color:#3d3d3d;line-height:1;white-space:pre;letter-spacing:1.289px;">Description</div>
<div class="" style="position:absolute;left:1641.00px;top:892.60px;font-family:'Liberation Sans', sans-serif;font-size:24px;font-weight:700;color:#3d3d3d;line-height:1;white-space:pre;letter-spacing:1.065px;">Locking Device Required State</div>
<div class="" style="position:absolute;left:2037.60px;top:892.60px;font-family:'Liberation Sans', sans-serif;font-size:24px;font-weight:700;color:#3d3d3d;line-height:1;white-space:pre;letter-spacing:1.200px;">Apply Sequence</div>
<div class="" style="position:absolute;left:2289.70px;top:892.60px;font-family:'Liberation Sans', sans-serif;font-size:24px;font-weight:700;color:#3d3d3d;line-height:1;white-space:pre;letter-spacing:1.150px;">Remove Sequence</div>
<div class="tx" style="position:absolute;left:820.60px;top:978.00px;font-family:'Liberation Sans', sans-serif;font-size:24px;font-weight:400;color:#161616;line-height:1;white-space:pre;letter-spacing:1.293px;">12222</div>
<div class="tx" style="position:absolute;left:1062.70px;top:978.00px;font-family:'Liberation Sans', sans-serif;font-size:24px;font-weight:400;color:#161616;line-height:1;white-space:pre;letter-spacing:-0.070px;">Centrifugal Pump 100 GPM, 60 FT-HD</div>
<div class="tx" style="position:absolute;left:1638.50px;top:975.80px;font-family:'Liberation Sans', sans-serif;font-size:24px;font-weight:400;color:#161616;line-height:1;white-space:pre;letter-spacing:0.000px;transform:scaleX(0.9115);transform-origin:0 0;">OFF</div>
<div class="tx" style="position:absolute;left:2231.64px;top:976.50px;font-family:'Liberation Sans', sans-serif;font-size:24px;font-weight:400;color:#161616;line-height:1;white-space:pre;letter-spacing:0.000px;">1</div>
<div class="tx" style="position:absolute;left:2511.64px;top:976.50px;font-family:'Liberation Sans', sans-serif;font-size:24px;font-weight:400;color:#161616;line-height:1;white-space:pre;letter-spacing:0.000px;">2</div>
<div class="tx" style="position:absolute;left:1067.00px;top:1050.90px;font-family:'Liberation Sans', sans-serif;font-size:24px;font-weight:400;color:#161616;line-height:1;white-space:pre;letter-spacing:0.312px;">Intake Valve 339-A</div>
<div class="tx" style="position:absolute;left:1642.00px;top:1049.90px;font-family:'Liberation Sans', sans-serif;font-size:24px;font-weight:400;color:#161616;line-height:1;white-space:pre;letter-spacing:0.000px;transform:scaleX(0.8886);transform-origin:0 0;">CLOSED</div>
<div class="tx" style="position:absolute;left:2231.64px;top:1049.90px;font-family:'Liberation Sans', sans-serif;font-size:24px;font-weight:400;color:#161616;line-height:1;white-space:pre;letter-spacing:0.000px;">2</div>
<div class="tx" style="position:absolute;left:2509.64px;top:1049.90px;font-family:'Liberation Sans', sans-serif;font-size:24px;font-weight:400;color:#161616;line-height:1;white-space:pre;letter-spacing:0.000px;">1</div>
<div class="tx" style="position:absolute;left:1067.00px;top:1120.90px;font-family:'Liberation Sans', sans-serif;font-size:24px;font-weight:400;color:#161616;line-height:1;white-space:pre;letter-spacing:0.057px;">Drain Valve 339-D</div>
<div class="tx" style="position:absolute;left:1642.00px;top:1119.90px;font-family:'Liberation Sans', sans-serif;font-size:24px;font-weight:400;color:#161616;line-height:1;white-space:pre;letter-spacing:0.000px;transform:scaleX(0.9229);transform-origin:0 0;">OPEN</div>
<div class="tx" style="position:absolute;left:2231.64px;top:1119.90px;font-family:'Liberation Sans', sans-serif;font-size:24px;font-weight:400;color:#161616;line-height:1;white-space:pre;letter-spacing:0.000px;">3</div>
<div class="tx" style="position:absolute;left:1067.00px;top:1190.90px;font-family:'Liberation Sans', sans-serif;font-size:24px;font-weight:400;color:#161616;line-height:1;white-space:pre;letter-spacing:0.247px;">Allow full drainage</div>
<div class="tx" style="position:absolute;left:2231.64px;top:1189.90px;font-family:'Liberation Sans', sans-serif;font-size:24px;font-weight:400;color:#161616;line-height:1;white-space:pre;letter-spacing:0.000px;">4</div>
<div class="tx" style="position:absolute;left:1067.00px;top:1260.90px;font-family:'Liberation Sans', sans-serif;font-size:24px;font-weight:400;color:#161616;line-height:1;white-space:pre;letter-spacing:0.057px;">Drain Valve 339-D</div>
<div class="tx" style="position:absolute;left:1642.00px;top:1259.90px;font-family:'Liberation Sans', sans-serif;font-size:24px;font-weight:400;color:#161616;line-height:1;white-space:pre;letter-spacing:0.000px;transform:scaleX(0.8886);transform-origin:0 0;">CLOSED</div>
<div class="tx" style="position:absolute;left:2231.64px;top:1259.90px;font-family:'Liberation Sans', sans-serif;font-size:24px;font-weight:400;color:#161616;line-height:1;white-space:pre;letter-spacing:0.000px;">5</div>
<div class="tx" style="position:absolute;left:533.20px;top:1352.50px;font-family:'Liberation Sans', sans-serif;font-size:26px;font-weight:400;color:#ffffff;line-height:1;white-space:pre;letter-spacing:0.972px;">New Row</div>
</body></html>
